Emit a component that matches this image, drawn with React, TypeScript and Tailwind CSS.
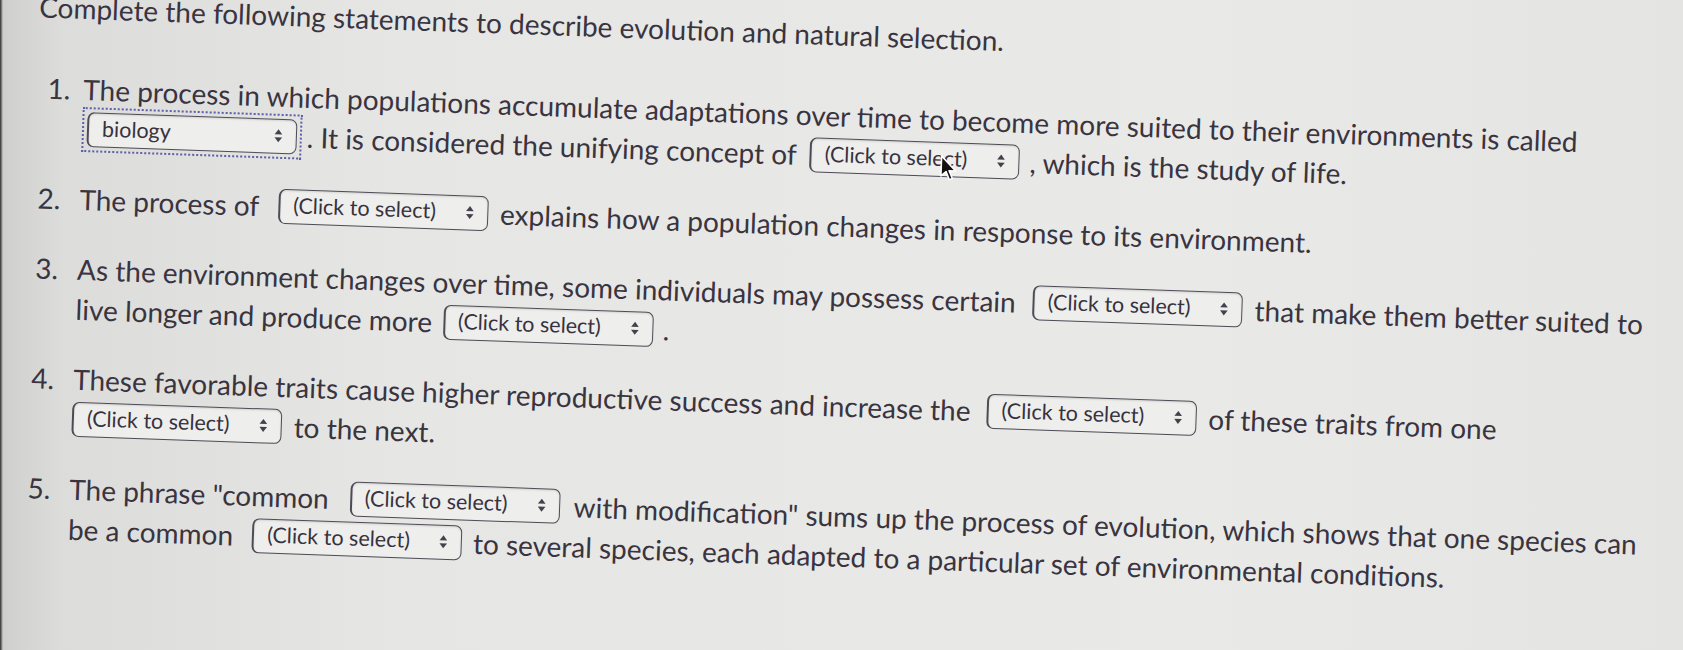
import type { ReactNode } from "react";

const Arrows = () => (
  <svg width="9" height="16" viewBox="0 0 9 16" className="shrink-0">
    <path d="M4.5 1.5 L8.3 6.5 L0.7 6.5 Z" fill="#45404b" />
    <path d="M4.5 14.5 L8.3 9.5 L0.7 9.5 Z" fill="#45404b" />
  </svg>
);

const Cursor = () => (
  <svg
    width="20"
    height="28"
    viewBox="0 0 20 28"
    className="pointer-events-none absolute left-[128px] top-[12px]"
  >
    <path
      d="M2 1 L2 21 L7 16.5 L10.5 24.5 L13.5 23.2 L10 15.5 L16.5 15.5 Z"
      fill="#111"
      stroke="#fff"
      strokeWidth="1.6"
      strokeLinejoin="round"
    />
  </svg>
);

interface SelectProps {
  label?: string;
  focused?: boolean;
  cursor?: boolean;
}

const Select = ({ label = "(Click to select)", focused = false, cursor = false }: SelectProps) => {
  const box = (
    <span className="relative inline-flex h-[35px] w-[210px] items-center justify-between rounded-[7px] border-[1.5px] border-l-[2.5px] border-[#4f4a55] bg-[#eeeeed] pl-[13px] pr-[13px] text-[21.5px] leading-none text-[#37323d] shadow-[inset_0_1px_2px_rgba(0,0,0,0.12)]">
      <span>{label}</span>
      <Arrows />
      {cursor && <Cursor />}
    </span>
  );
  if (!focused) return box;
  return (
    <span className="inline-flex border-2 border-dotted border-[#5d5fa8] p-[3px]">{box}</span>
  );
};

const Line = ({ children }: { children: ReactNode }) => (
  <div className="flex h-[40px] items-center whitespace-nowrap">{children}</div>
);

const Item = ({ n, children }: { n: number; children: ReactNode }) => (
  <li className="flex">
    <span
      className={
        n === 1
          ? "h-[40px] w-[74px] shrink-0 text-right leading-[40px]"
          : "h-[40px] w-[68px] shrink-0 text-right leading-[40px]"
      }
    >
      {n}.
    </span>
    <div className={n === 1 ? "ml-[13px] flex flex-col" : "ml-[19px] flex flex-col"}>{children}</div>
  </li>
);

const Gap = ({ children, className = "ml-[17px] mr-[12px]" }: { children: ReactNode; className?: string }) => (
  <span className={`inline-flex ${className}`}>{children}</span>
);

export default function App() {
  return (
    <div className="relative h-[650px] w-[1683px] overflow-hidden bg-[linear-gradient(90deg,#2a2a2a_0px,#cfcfcd_3px,#dcdcda_60px,#e6e6e4_400px,#e9e9e7_1200px,#e4e4e2_1683px)] font-['Lato','Open_Sans',sans-serif] text-[28px] text-[#39343f]">
      <div className="-mt-[22px] origin-top-left rotate-[2deg]">
        <div className="ml-[40px] mt-[7px] h-[40px] whitespace-nowrap leading-[40px]">
          Complete the following statements to describe evolution and natural selection.
        </div>

        <ol className="mt-[41px] flex flex-col gap-[30px]">
          <Item n={1}>
            <Line>
              The process in which populations accumulate adaptations over time to become more suited to their
              environments is called
            </Line>
            <Line>
              <Select label="biology" focused />
              <span className="ml-[5px]">. It is considered the unifying concept of</span>
              <Gap className="ml-[13px] mr-[10px]">
                <Select cursor />
              </Gap>
              , which is the study of life.
            </Line>
          </Item>

          <Item n={2}>
            <Line>
              The process of
              <Gap className="ml-[19px] mr-[12px]">
                <Select />
              </Gap>
              explains how a population changes in response to its environment.
            </Line>
          </Item>

          <Item n={3}>
            <Line>
              As the environment changes over time, some individuals may possess certain
              <Gap>
                <Select />
              </Gap>
              that make them better suited to
            </Line>
            <Line>
              live longer and produce more
              <Gap className="ml-[11px] mr-[10px]">
                <Select />
              </Gap>
              .
            </Line>
          </Item>

          <Item n={4}>
            <Line>
              These favorable traits cause higher reproductive success and increase the
              <Gap className="ml-[16px] mr-[12px]">
                <Select />
              </Gap>
              of these traits from one
            </Line>
            <Line>
              <Gap className="mr-[12px]">
                <Select />
              </Gap>
              to the next.
            </Line>
          </Item>

          <Item n={5}>
            <Line>
              The phrase "common
              <Gap className="ml-[21px] mr-[14px]">
                <Select />
              </Gap>
              with modification" sums up the process of evolution, which shows that one species can
            </Line>
            <Line>
              be a common
              <Gap className="ml-[19px] mr-[11px]">
                <Select />
              </Gap>
              to several species, each adapted to a particular set of environmental conditions.
            </Line>
          </Item>
        </ol>
      </div>
    </div>
  );
}
